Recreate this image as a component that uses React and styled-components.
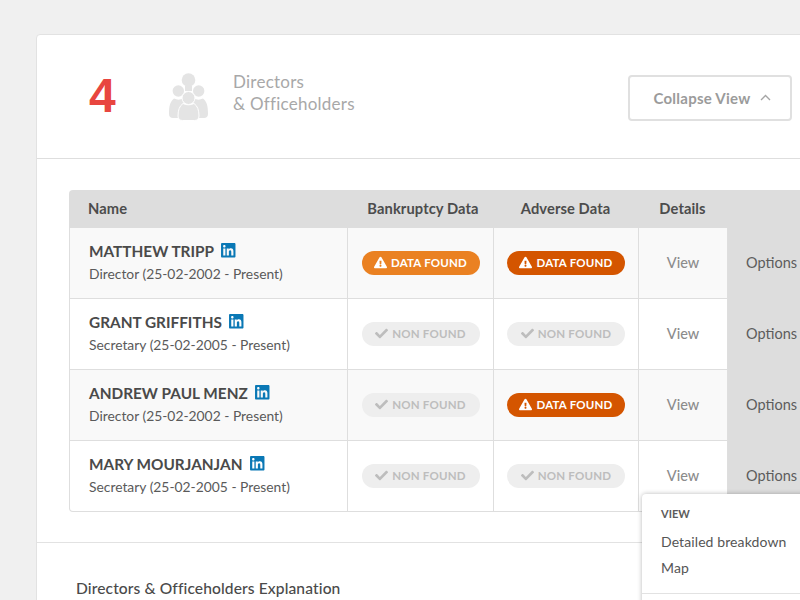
import React from "react";
import styled, { createGlobalStyle } from "styled-components";
import { FaLinkedin, FaExclamationTriangle, FaCheck } from "react-icons/fa";

const Global = createGlobalStyle`
  html, body { margin: 0; height: 600px; overflow: hidden; background: #f0f0f0; }
  body { font-family: "Lato", "Open Sans", sans-serif; color: #4a4a4a; -webkit-font-smoothing: antialiased; }
  * { box-sizing: border-box; }
`;

const Page = styled.div`
  width: 800px;
  height: 600px;
  overflow: hidden;
  padding: 34px 0 0 36px;
`;
const Card = styled.section`
  position: relative;
  width: 900px;
  height: 700px;
  background: #fff;
  border: 1px solid #e2e2e2;
  border-radius: 4px;
`;
const Summary = styled.header`
  height: 124px;
  display: flex;
  align-items: center;
  border-bottom: 1px solid #dedede;
`;
const Count = styled.div`
  width: 131px;
  padding-left: 52px;
  font-family: "Liberation Sans", sans-serif;
  font-weight: 700;
  font-size: 48px;
  line-height: 1;
  color: #e8463f;
  margin-top: -2px;
`;
const PeopleBox = styled.div`
  width: 65px;
  height: 50px;
  display: flex;
`;
const SummaryLabel = styled.div`
  font-size: 17px;
  line-height: 22px;
  color: #a8a8a8;
  width: 395px;
  margin-top: -7px;
  letter-spacing: 0.25px;
`;
const Collapse = styled.button`
  width: 164px;
  height: 46px;
  margin-top: 2px;
  background: #fff;
  border: 2px solid #e0e0e0;
  border-radius: 4px;
  display: flex;
  align-items: center;
  justify-content: center;
  gap: 9px;
  font: 700 15px "Lato", sans-serif;
  letter-spacing: 0.25px;
  color: #9b9b9b;
  padding: 0 0 0 4px;
`;
const TableWrap = styled.div`
  margin: 31px 0 0 32px;
  width: 900px;
  border-radius: 4px;
`;
const Row = styled.div`
  display: grid;
  grid-template-columns: 279px 146px 145px 89px 241px;
`;
const HeadRow = styled(Row)`
  height: 38px;
  background: #dddddd;
  border-radius: 4px 4px 0 0;
  align-items: center;
  padding-bottom: 2px;
`;
const HeadCell = styled.div`
  font-size: 14.7px;
  font-weight: 700;
  color: #4c4c4c;
  text-align: center;
  padding-left: ${(p) => p.$pl || 0}px;
  padding-right: ${(p) => p.$pr || 0}px;
  letter-spacing: 0.1px;
`;
const NameHead = styled(HeadCell)`
  text-align: left;
`;
const BodyRow = styled(Row)`
  height: 71px;
  background: ${(p) => (p.$shade ? "#f9f9f9" : "#fff")};
`;
const Cell = styled.div`
  display: flex;
  align-items: center;
  justify-content: center;
  border-right: 1px solid #dedede;
  border-bottom: 1px solid #dedede;
`;
const NameCell = styled(Cell)`
  flex-direction: column;
  align-items: flex-start;
  justify-content: flex-start;
  padding: 13px 0 0 19px;
  border-left: 1px solid #dedede;
  border-radius: 0 0 0 ${(p) => (p.$last ? "4px" : "0")};
`;
const NameLine = styled.div`
  display: flex;
  align-items: center;
  gap: 6px;
  height: 20px;
  font-size: 15.35px;
  font-weight: 700;
  color: #4a4a4a;
  white-space: nowrap;
`;
const LinkedIn = styled(FaLinkedin)`
  width: 16.5px;
  height: 16.5px;
  color: #0a78b5;
  margin-top: -1px;
`;
const Role = styled.div`
  margin-top: 3px;
  font-size: 13.85px;
  line-height: 20px;
  color: #5a5a5a;
  white-space: nowrap;
`;
const Badge = styled.div`
  width: 118px;
  height: 24px;
  border-radius: 12px;
  display: flex;
  align-items: center;
  justify-content: center;
  gap: 4px;
  padding-bottom: 1px;
  background: ${(p) => p.$bg};
  color: ${(p) => p.$fg};
  font-size: 11.5px;
  font-weight: 700;
  letter-spacing: 0.2px;
  white-space: nowrap;
  svg { width: 13px; height: 13px; flex: none; }
`;
const ViewCell = styled(Cell)`
  padding-bottom: 1px;
`;
const ViewLink = styled.span`
  font-size: 14.5px;
  color: #8c8c8c;
  font-weight: 500;
`;
const OptionsCell = styled.div`
  background: #dddddd;
  display: flex;
  align-items: center;
  padding: 0 0 3px 18px;
  font-size: 14.5px;
  color: #5c5c5c;
`;
const Divider = styled.hr`
  margin: 30px 0 0;
  border: 0;
  border-top: 1px solid #e2e2e2;
`;
const Explanation = styled.h2`
  margin: 35px 0 0 39px;
  font-size: 15.6px;
  line-height: 20px;
  font-weight: 500;
  color: #4a4a4a;
  letter-spacing: 0.1px;
`;
const Menu = styled.div`
  position: absolute;
  left: 605px;
  top: 459px;
  width: 240px;
  height: 200px;
  background: #fff;
  border-radius: 4px;
  box-shadow: 0 0 5px rgba(0, 0, 0, 0.28);
  padding: 12px 0 0 19px;
`;
const MenuTitle = styled.div`
  font-size: 11px;
  line-height: 16px;
  font-weight: 700;
  color: #5c5c5c;
  margin-bottom: 7px;
`;
const MenuItem = styled.div`
  font-size: 14px;
  line-height: 26px;
  color: #555;
  letter-spacing: 0.1px;
`;
const MenuRule = styled.div`
  margin: 12px 0 0 -19px;
  border-top: 1px solid #e2e2e2;
`;

const People = () => (
  <svg width="42" height="50" viewBox="0 0 42 50" fill="#e4e4e4">
    <circle cx="20.500" cy="8" r="6.800" />
    <circle cx="10.300" cy="19" r="5.700" />
    <circle cx="30.700" cy="19" r="5.700" />
    <path d="M17 14h7v5h-7z" />
    <path d="M1 42c0-8 1-12 5-15.500 3 1.500 6 1.500 9 0l2 16-1 3.500H5c-2.500 0-4-1.500-4-4zM40 42c0-8-1-12-5-15.500-3 1.500-6 1.500-9 0l-2 16 1 3.500h11c2.500 0 4-1.500 4-4z" />
    <circle cx="20.500" cy="26" r="6.500" stroke="#fff" strokeWidth="1" />
    <path d="M10 44c0-6 1.500-10 5-12.500 3.500 1.800 7.500 1.800 11 0 3.500 2.500 5 6.500 5 12.500 0 3-2 4.500-4.500 4.500h-12C12 48.500 10 47 10 44z" stroke="#fff" strokeWidth="1" />
  </svg>
);

const Chevron = () => (
  <svg width="11" height="7" viewBox="0 0 11 7" fill="none" stroke="#a5a5a5" strokeWidth="1.4">
    <path d="M1 6l4.500-4.500L10 6" />
  </svg>
);

const StatusBadge = ({ kind }) => {
  if (kind === "none")
    return <Badge $bg="#eeeeee" $fg="#bdbdbd"><FaCheck />NON FOUND</Badge>;
  return (
    <Badge $bg={kind === "orange" ? "#ea8122" : "#d45500"} $fg="#fff">
      <FaExclamationTriangle />DATA FOUND
    </Badge>
  );
};

const people = [
  ["MATTHEW TRIPP", "Director (25-02-2002 - Present)", "orange", "red"],
  ["GRANT GRIFFITHS", "Secretary (25-02-2005 - Present)", "none", "none"],
  ["ANDREW PAUL MENZ", "Director (25-02-2002 - Present)", "none", "red"],
  ["MARY MOURJANJAN", "Secretary (25-02-2005 - Present)", "none", "none"],
];

export default function App() {
  return (
    <Page>
      <Global />
      <Card>
        <Summary>
          <Count>4</Count>
          <PeopleBox><People /></PeopleBox>
          <SummaryLabel>Directors<br />&amp; Officeholders</SummaryLabel>
          <Collapse>Collapse View <Chevron /></Collapse>
        </Summary>
        <TableWrap>
          <HeadRow>
            <NameHead $pl={19}>Name</NameHead>
            <HeadCell $pl={4}>Bankruptcy Data</HeadCell>
            <HeadCell $pr={2}>Adverse Data</HeadCell>
            <HeadCell $pr={2}>Details</HeadCell>
            <HeadCell />
          </HeadRow>
          {people.map(([name, role, a, b], i) => (
            <BodyRow key={name} $shade={i % 2 === 0}>
              <NameCell $last={i === 3}>
                <NameLine>{name} <LinkedIn /></NameLine>
                <Role>{role}</Role>
              </NameCell>
              <Cell><StatusBadge kind={a} /></Cell>
              <Cell><StatusBadge kind={b} /></Cell>
              <ViewCell><ViewLink>View</ViewLink></ViewCell>
              <OptionsCell>Options</OptionsCell>
            </BodyRow>
          ))}
        </TableWrap>
        <Divider />
        <Explanation>Directors &amp; Officeholders Explanation</Explanation>
        <Menu>
          <MenuTitle>VIEW</MenuTitle>
          <MenuItem>Detailed breakdown</MenuItem>
          <MenuItem>Map</MenuItem>
          <MenuRule />
        </Menu>
      </Card>
    </Page>
  );
}
